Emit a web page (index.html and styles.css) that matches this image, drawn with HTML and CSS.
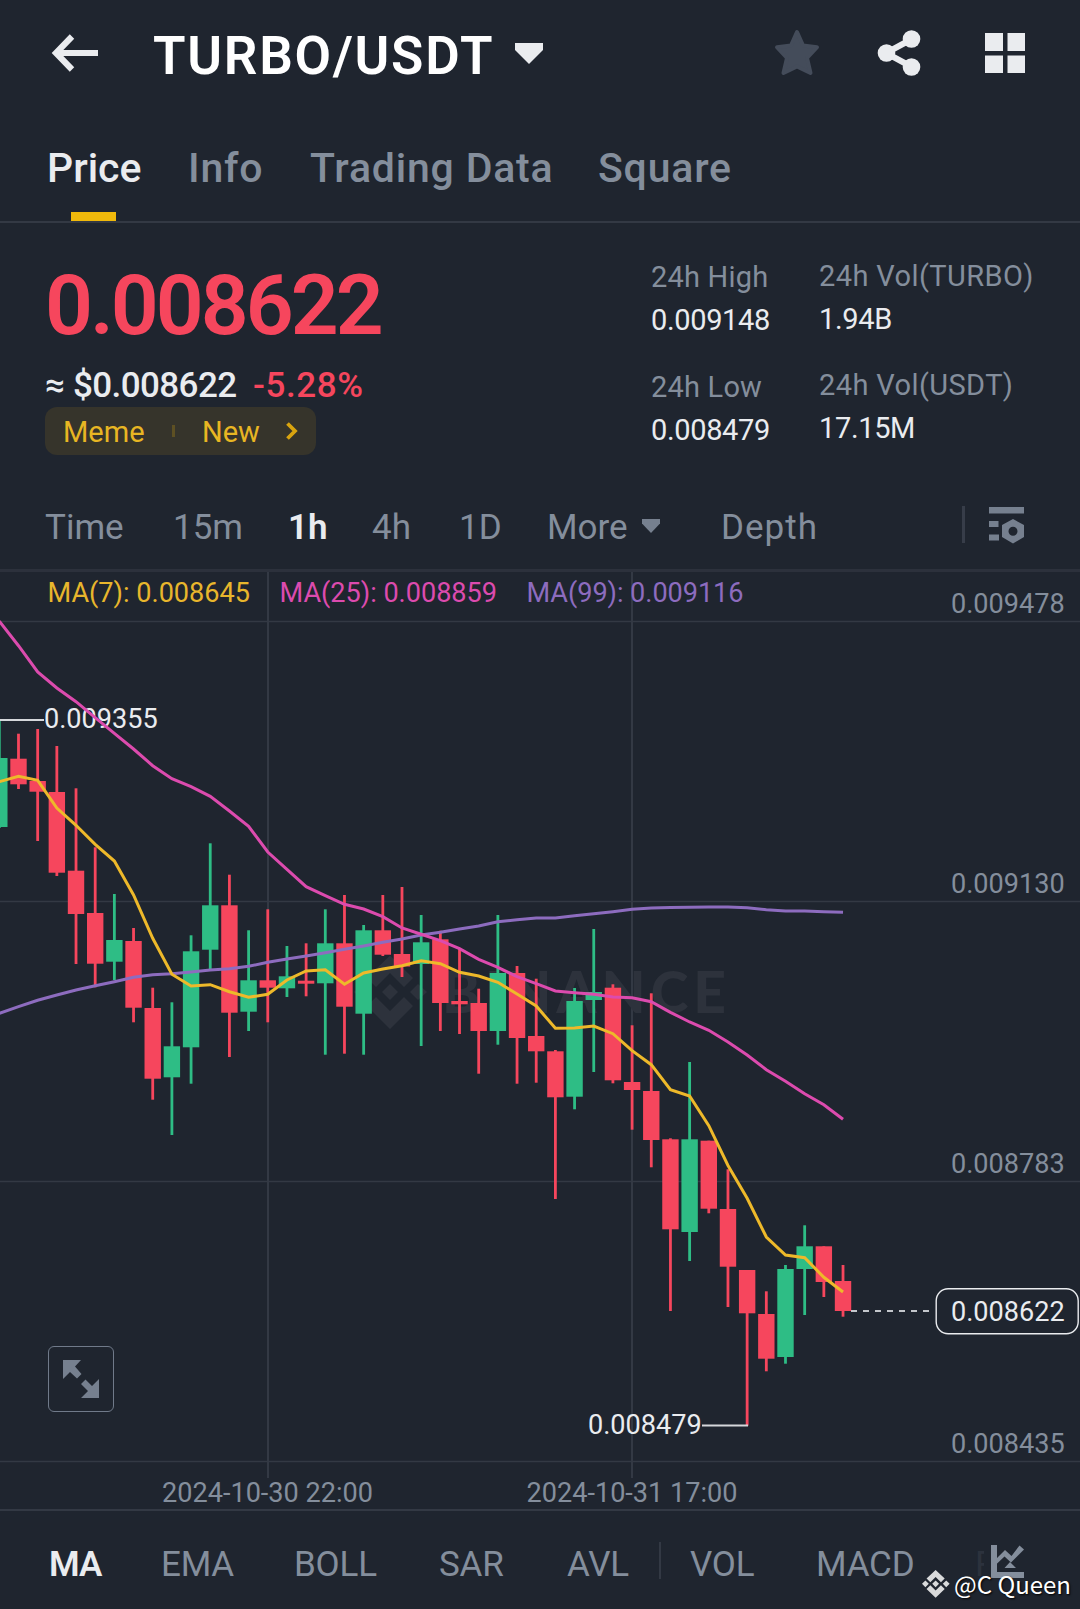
FILE: index.html
```html
<!DOCTYPE html>
<html>
	<head>
		<meta charset="UTF-8">
		<title>TURBO/USDT</title>
		<link rel="stylesheet" href="styles.css">
	</head>
	<body>
		<div id="app">
			<header class="header">
				<svg class="back" width="48" height="38" viewBox="0 0 48 38">
					<path d="M47 19H6M21 2.500L5 19L21 35.500" fill="none" stroke="#eaecef" stroke-width="6.200"/>
				</svg>
				<h1 class="pair">TURBO/USDT</h1>
				<svg class="caret" width="28" height="21" viewBox="0 0 28 21"><path d="M0 0H28V7L14 21L0 7Z" fill="#eaecef"/></svg>
				<div class="actions">
					<svg width="46" height="48" viewBox="0 0 46 48">
						<path d="M23 3L29 16.500L43 18.200L33 29L36.500 44L23 37.500L9.500 44L13 29L3 18.200L17 16.500Z" fill="#444c5a" stroke="#444c5a" stroke-width="4" stroke-linejoin="round"/>
					</svg>
					<svg width="44" height="48" viewBox="0 0 44 48">
						<path d="M35 10L9 24L35 38" fill="none" stroke="#eaecef" stroke-width="6"/>
						<circle cx="34.500" cy="10" r="8.800" fill="#eaecef"/>
						<circle cx="9.500" cy="24" r="8.800" fill="#eaecef"/>
						<circle cx="34.500" cy="38" r="8.800" fill="#eaecef"/>
					</svg>
					<svg width="40" height="40" viewBox="0 0 40 40">
						<path d="M0 0H18V18H0ZM22.500 0H40V18H22.500ZM0 22.500H18V40H0ZM22.500 22.500H40V40H22.500Z" fill="#eaecef"/>
					</svg>
				</div>
			</header>

			<nav class="tabs">
				<a class="tab active">Price</a>
				<a class="tab">Info</a>
				<a class="tab">Trading Data</a>
				<a class="tab">Square</a>
			</nav>

			<section class="quote">
				<div class="left">
					<div class="price">0.008622</div>
					<div class="approx"><span class="sign">≈</span><span class="usd">$0.008622</span><span class="change">-5.28%</span></div>
					<div class="tags">
						<span class="meme">Meme</span>
						<i></i>
						<span class="new">New</span>
						<svg width="12" height="18" viewBox="0 0 12 18"><path d="M1.500 1.500L9 9L1.500 16.500" fill="none" stroke="#d9a40f" stroke-width="3.800"/></svg>
					</div>
				</div>
				<dl class="stats hl">
					<dt>24h High</dt>
					<dd>0.009148</dd>
					<dt>24h Low</dt>
					<dd>0.008479</dd>
				</dl>
				<dl class="stats vol">
					<dt>24h Vol(TURBO)</dt>
					<dd>1.94B</dd>
					<dt>24h Vol(USDT)</dt>
					<dd>17.15M</dd>
				</dl>
			</section>

			<nav class="intervals">
				<span>Time</span>
				<span>15m</span>
				<span class="active">1h</span>
				<span>4h</span>
				<span>1D</span>
				<span class="more">More <svg width="18" height="14" viewBox="0 0 18 14"><path d="M0 0H18V4.500L9 14L0 4.500Z" fill="#76808f"/></svg></span>
				<span class="depth">Depth</span>
				<i></i>
				<svg width="36" height="38" viewBox="0 0 36 38">
					<path d="M0 1H35V7.500H0ZM0 15H9.500V21H0ZM0 28.500H10V34.500H0Z" fill="#76808f"/>
					<path fill-rule="evenodd" d="M24 13L35 19V31L24 37.500L13 31V19ZM24 20.700A4.500 4.500 0 1 0 24 29.700A4.500 4.500 0 1 0 24 20.700Z" fill="#76808f"/>
				</svg>
			</nav>

			<div class="chart">
				<svg id="kline" width="1080" height="937" viewBox="0 572 1080 937">
					<g class="grid">
						<path d="M0 621.500H1080M0 901.500H1080M0 1181.500H1080M0 1461.500H1080"/>
						<path class="v" d="M268 572V1478M632 572V1478"/>
					</g>
					<g class="mark">
						<path d="M390 955.500L413 978L404 987L390 973L376 987L367 978ZM390 984L398 992L390 1000L382 992ZM362 984L370 992L362 1000L354 992ZM418 984L427 992L418 1000L410 992ZM367 1006L376 997L390 1011L404 997L413 1006L390 1029Z"/>
						<text x="442" y="1012.500" textLength="284">BINANCE</text>
					</g>
					<g id="candles"></g>
					<path class="peak" d="M0 720H44M702 1425.500H748"/>
					<text class="white" x="44" y="727.500">0.009355</text>
					<text class="white" x="588" y="1433.500">0.008479</text>
					<g id="lines"></g>
					<path class="now" d="M851 1311H930"/>
					<rect class="nowbox" x="936.200" y="1288.700" width="142" height="45" rx="12"/>
					<text class="white" x="951" y="1321">0.008622</text>
					<g class="axis">
						<text x="951" y="613">0.009478</text>
						<text x="951" y="893">0.009130</text>
						<text x="951" y="1173">0.008783</text>
						<text x="951" y="1453">0.008435</text>
						<text x="162" y="1502" textLength="211">2024-10-30 22:00</text>
						<text x="526.500" y="1502" textLength="211">2024-10-31 17:00</text>
					</g>
					<text class="ma7" x="47.500" y="602" textLength="202.500">MA(7): 0.008645</text>
					<text class="ma25" x="279.500" y="602" textLength="217.500">MA(25): 0.008859</text>
					<text class="ma99" x="526.500" y="602" textLength="217">MA(99): 0.009116</text>
				</svg>
				<button class="expand">
					<svg width="36" height="38" viewBox="0 0 36 38">
						<path d="M0 0H18L12 6.500L18.500 14L14 18.500L7 12L0 19ZM36 38H18L25 31L18 24L22.500 19.500L29 26L36 19Z" fill="#76808f"/>
					</svg>
				</button>
			</div>

			<nav class="indicators">
				<span class="active">MA</span>
				<span>EMA</span>
				<span>BOLL</span>
				<span>SAR</span>
				<span>AVL</span>
				<i></i>
				<span>VOL</span>
				<span>MACD</span>
				<span class="faded">R</span>
				<svg width="33" height="33" viewBox="0 0 33 33">
					<path d="M0 0H6V27H33V33H0Z" fill="#848e9c"/>
					<path d="M4 15L14 5L20.500 11L28.500 0.500L33 4.500L20 17.500L13.500 11.500L4 20.500ZM19 17L25 23H13.500Z" fill="#848e9c"/>
				</svg>
			</nav>

			<div class="author">
				<svg width="28" height="30" viewBox="354 955 74 75">
					<path fill="#d9dadb" d="M390 955.500L414 978L404 988L390 974L376 988L366 978ZM390 983L399 992L390 1001L381 992ZM363 983L372 992L363 1001L354 992ZM418 983L427 992L418 1001L409 992ZM366 1006L376 996L390 1010L404 996L414 1006L390 1029Z"/>
				</svg>
				<span>@C Queen</span>
			</div>
		</div>

		<script>
			// 1涨 0跌, 最高, 实体上, 实体下, 最低
			let candles = [
				[1,720,758,827,828],[0,733.7,758.7,784.3,789],[0,729,781,791.7,841],[0,746,792,872.7,876],
				[0,788.3,870.7,914,964],[0,847.3,913,963.7,987.3],[1,894,940,961.7,980],[0,928,941,1007.7,1022.3],
				[0,987.7,1008,1078.7,1099.7],[1,1002.3,1046.3,1077.3,1135],[1,935.3,951.3,1047.3,1083.7],[1,843.3,905.3,949.7,970.7],
				[0,874.7,905.3,1012.7,1057],[1,930.3,980.3,1011.7,1031],[0,909.3,980.3,987.7,1022.3],[1,946,976.3,988.3,997],
				[0,943.3,980.7,983.7,996.3],[1,909.3,943.3,983.3,1054.7],[0,895,943.3,1006.7,1053.7],[1,925,930.3,1013.7,1054.7],
				[0,895,930.3,954.7,956],[0,887,954,966.5,977],[1,915,942.3,964,1046],[0,930.7,939.3,1003,1031],
				[0,948,1001,1004.3,1034],[0,988.7,1003,1031,1073.7],[1,915,973,1031,1044.7],[0,966,973,1038,1083.7],
				[0,978.7,1036,1051.3,1082.7],[0,1050,1051.3,1097.3,1199],[1,988,1001,1096.7,1109.3],[1,929,992,1000,1072],
				[0,984.3,987.7,1080.3,1083.3],[0,1025.3,1082,1090,1129.7],[0,993.3,1091,1140,1167.3],[0,1138.3,1139.3,1229.3,1311],
				[1,1062,1139.3,1232,1261],[0,1140.7,1140.7,1208.7,1213.3],[0,1169.3,1209,1266.7,1307],[0,1270,1270,1313.3,1425.7],
				[0,1291.3,1314,1358.7,1371.3],[1,1265,1269,1357,1363.7],[1,1225.3,1246.3,1269,1315],[0,1246.3,1246.3,1282,1297],
				[0,1265,1281,1311,1316.7]
			]
			let ma = {
				ma99: [1013.3,1006.7,1000.3,995,990,985.7,981.7,977.3,974.7,973.7,972,970,968.7,966.3,962.3,959,956,952.7,949.3,946,942.3,939,935,932.3,929,926,921.7,919.7,918,918,915.7,913.7,911.7,909.3,908,907.5,907.2,907,907,907.7,909.7,911,911,911.7,912.3],
				ma25: [621.3,645.7,672,688,701.7,717.7,733.3,749,765.7,778.7,786.7,796.3,811,826.3,852,869.3,886.7,895.7,904.3,909,916.7,928,934.3,940.7,948.7,959.3,967.3,976.7,983.7,991,992.7,994.3,997,997.7,1001.7,1012.3,1022,1030.3,1042,1055,1069.7,1081.3,1093.7,1104.7,1119.3],
				ma7: [781.7,776.3,780.3,808,825.3,844.3,861,895,938.3,974.3,986,984.7,991.7,997.3,994.3,980,971,969.7,984.3,973,969,965.7,960.7,963.7,972.3,976,982.3,994,1006,1028.3,1028,1026,1033.7,1050.7,1064.7,1089.7,1096,1125.7,1165.5,1198.3,1237,1255,1257.7,1277.3,1292]
			}
			let getX = i => -0.68 + 19.175 * i

			let html = ''
			candles.forEach(function(c, i){
				let x = getX(i)
				html += `<g class="${c[0] ? 'up' : 'down'}">
					<rect x="${x - 1.4}" y="${c[1]}" width="2.8" height="${c[4] - c[1]}"/>
					<rect x="${x - 8.2}" y="${c[2]}" width="16.4" height="${c[3] - c[2]}"/>
				</g>`
			})
			document.getElementById('candles').innerHTML = html

			html = ''
			for(let name in ma){
				let points = ma[name].map((y, i) => getX(i) + ',' + y).join(' ')
				html += `<polyline class="${name}" points="${points}"/>`
			}
			document.getElementById('lines').innerHTML = html
		</script>
	</body>
</html>
```

FILE: styles.css
```css
*{
	margin: 0;
	padding: 0;
	box-sizing: border-box;
}
body{
	background: #1f252f;
	font-family: Roboto, "Liberation Sans", sans-serif;
	color: #eaecef;
}
svg{
	display: block;
	flex: none;
}
#app{
	position: relative;
	width: 1080px;
	height: 1609px;
	overflow: hidden;
}

/* 顶部 */
.header{
	display: flex;
	align-items: center;
	height: 106px;
	padding: 0 55px 0 51px;
}
.pair{
	margin: 6px 0 0 54px;
	width: 362px;
	font-size: 53px;
	font-weight: 600;
	letter-spacing: 1.7px;
	color: #fff;
	white-space: nowrap;
}
.actions{
	display: flex;
	align-items: center;
	margin-left: auto;
}
.actions svg:nth-child(2){
	margin: 0 64px 0 57px;
}

.tabs{
	display: grid;
	grid-template-columns: 140px 122px 288px 1fr;
	height: 117px;
	padding-left: 48px;
	border-bottom: 2px solid #333944;
	font-size: 41px;
	font-weight: 500;
	line-height: 124px;
	letter-spacing: 0.8px;
	color: #848e9c;
}
.tab{
	position: relative;
	height: 115px;
}
.tab.active{
	margin-left: -1px;
	letter-spacing: 0;
	color: #eaecef;
}
.tab.active::after{
	content: "";
	position: absolute;
	left: 24px;
	bottom: 0;
	width: 45px;
	height: 9px;
	background: #f0b90b;
}

/* 价格 */
.quote{
	display: grid;
	grid-template-columns: 606px 168px 1fr;
	height: 261px;
	padding-left: 45px;
}
.left{
	padding-top: 41px;
}
.price{
	font-size: 84px;
	font-weight: 600;
	line-height: 84px;
	letter-spacing: -3px;
	color: #f6465d;
}
.approx{
	display: flex;
	margin-top: 18px;
	font-size: 35px;
	font-weight: 500;
	line-height: 40px;
}
.sign{
	width: 28px;
}
.usd{
	width: 180px;
	letter-spacing: -0.6px;
}
.change{
	letter-spacing: 0.6px;
	color: #f6465d;
}
.tags{
	display: flex;
	align-items: center;
	width: 271px;
	height: 48px;
	margin-top: 1px;
	padding-left: 18px;
	border-radius: 12px;
	background: #36342b;
	font-size: 29px;
	line-height: 36px;
	color: #e8b623;
}
.tags i{
	width: 3px;
	height: 12px;
	background: #5e5023;
}
.meme{
	width: 109px;
	padding-top: 2px;
}
.new{
	width: 84px;
	margin-left: 27px;
	padding-top: 2px;
}
.stats{
	padding-top: 33px;
	font-size: 29px;
	line-height: 43px;
	white-space: nowrap;
}
.stats dt{
	letter-spacing: 0.2px;
	color: #848e9c;
}
.stats dd{
	margin-bottom: 24px;
	letter-spacing: -0.35px;
}
.vol{
	padding-top: 32px;
	line-height: 42.5px;
}
.vol dt{
	letter-spacing: 0.4px;
}

/* 周期 */
.intervals{
	display: grid;
	grid-template-columns: 128px 115px 84px 87px 87px 175px 240px 28px 1fr;
	align-items: center;
	height: 88px;
	padding-left: 45px;
	border-bottom: 3px solid #2c313c;
	font-size: 35px;
	color: #848e9c;
}
.intervals span{
	padding-top: 2px;
}
.intervals .active, .indicators .active{
	font-weight: 600;
	color: #eaecef;
}
.indicators .active{
	letter-spacing: -1px;
}
.more{
	display: flex;
	align-items: center;
	gap: 14px;
	padding-left: 1px;
}
.more svg{
	margin-top: -4px;
}
.depth{
	letter-spacing: 1px;
}
.intervals i{
	width: 3px;
	height: 37px;
	margin: -5px 0 0 1px;
	background: #373d49;
}
.intervals > svg{
	margin-top: -4px;
}

/* K线图 */
.chart{
	position: relative;
	height: 937px;
}
.chart text{
	font-size: 27.1px;
}
.grid{
	fill: none;
	stroke: #333944;
	stroke-width: 1.4;
}
.grid .v{
	stroke-width: 2;
}
.mark{
	fill: #2d323c;
}
.chart .mark text{
	font-family: Lato, sans-serif;
	font-size: 57px;
	font-weight: 900;
}
.up{
	fill: #2ebd85;
}
.down{
	fill: #f6465d;
}
#lines polyline{
	fill: none;
	stroke-width: 3;
}
#lines .ma7{
	stroke: #eeb92a;
}
#lines .ma25{
	stroke: #dc4bae;
}
#lines .ma99{
	stroke: #8d6cbf;
}
text.ma7{
	fill: #e8b62c;
}
text.ma25{
	fill: #dc4bae;
}
text.ma99{
	fill: #8d6cbf;
}
.peak{
	stroke: #d5d7db;
	stroke-width: 2;
}
.white{
	fill: #eaecef;
}
.axis{
	fill: #848e9c;
}
.now{
	stroke: #c4c7cc;
	stroke-width: 1.8;
	stroke-dasharray: 6 6;
}
.nowbox{
	fill: #1f252f;
	stroke: #eaecef;
	stroke-width: 1.4;
}
.expand{
	position: absolute;
	left: 48px;
	top: 774px;
	display: flex;
	align-items: center;
	justify-content: center;
	width: 66px;
	height: 66px;
	border: 1.5px solid #707a8a;
	border-radius: 6px;
	background: none;
}

/* 指标 */
.indicators{
	display: grid;
	grid-template-columns: 112px 133px 145px 128px 92px 31px 126px 159px 16px 1fr;
	align-items: center;
	height: 100px;
	padding: 7px 0 0 49px;
	border-top: 2px solid #333944;
	font-size: 35px;
	letter-spacing: -0.2px;
	color: #848e9c;
}
.indicators span{
	padding-top: 1px;
}
.indicators i{
	width: 2px;
	height: 37px;
	margin-top: -7px;
	background: #333944;
}
.faded{
	width: 9px;
	overflow: hidden;
	color: #2c323d;
}
.indicators > svg{
	margin-top: -5px;
}
.author{
	position: absolute;
	left: 922px;
	top: 1566px;
	display: flex;
	align-items: center;
	gap: 4px;
	font-family: "Noto Sans CJK SC", sans-serif;
	font-size: 24px;
	font-weight: 400;
	line-height: 36px;
	color: #fff;
	text-shadow: 1px 1px 2px #000;
	white-space: nowrap;
}
```
